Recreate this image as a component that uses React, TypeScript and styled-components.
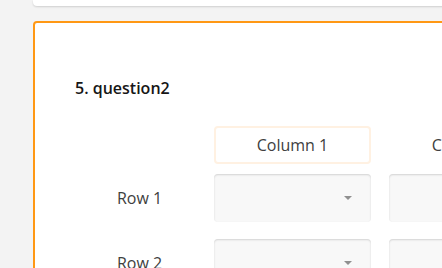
import React from "react";
import styled, { createGlobalStyle } from "styled-components";

const Global = createGlobalStyle`
  html, body { margin: 0; padding: 0; background: #f3f3f3; overflow: hidden; }
  body { font-family: "Open Sans", "Noto Sans", sans-serif; width: 442px; height: 268px; }
`;

const Page = styled.div`
  padding-left: 33px;
  display: flex;
  flex-direction: column;
  gap: 15px;
`;

const TopCard = styled.div`
  width: 700px;
  height: 6px;
  background: #ffffff;
  border-radius: 0 0 4px 4px;
  box-shadow: 0 1px 2px rgba(0, 0, 0, 0.15);
`;

const QuestionCard = styled.div`
  width: 700px;
  height: 400px;
  box-sizing: border-box;
  background: #ffffff;
  border: 2px solid #ff9814;
  border-radius: 4px;
  padding: 53px 0 0 40px;
`;

const Title = styled.div`
  font-size: 16px;
  line-height: 24px;
  font-weight: 600;
  color: #161616;
  margin-bottom: 26px;
`;

const MatrixRow = styled.div<{ $gap: number }>`
  display: grid;
  grid-template-columns: 129px 175px 175px;
  align-items: center;
  margin-bottom: ${(p) => p.$gap}px;
`;

const RowLabel = styled.div`
  font-size: 16px;
  line-height: 24px;
  color: #404040;
  text-align: center;
`;

const Cell = styled.div`
  padding: 0 8px 0 10px;
`;

const ColumnHeader = styled.div<{ $active?: boolean }>`
  box-sizing: border-box;
  height: 38px;
  display: flex;
  align-items: center;
  justify-content: center;
  font-size: 16px;
  color: #404040;
  border-radius: 4px;
  border: 2px solid ${(p) => (p.$active ? "#fff1e2" : "transparent")};
  white-space: nowrap;
`;

const Dropdown = styled.div`
  box-sizing: border-box;
  height: 48px;
  background: #f8f8f8;
  border-radius: 4px;
  box-shadow: inset 0 1px 2px rgba(0, 0, 0, 0.15);
  display: flex;
  align-items: center;
  justify-content: flex-end;
  padding-right: 19px;
`;

const Arrow = () => (
  <svg width="8" height="4" viewBox="0 0 8 4">
    <path d="M0 0 L8 0 L4 4 Z" fill="#909090" />
  </svg>
);

export default function App() {
  const rows = ["Row 1", "Row 2"];
  return (
    <>
      <Global />
      <Page>
        <TopCard />
        <QuestionCard>
          <Title>5. question2</Title>
          <MatrixRow $gap={10}>
            <RowLabel />
            <Cell>
              <ColumnHeader $active>Column 1</ColumnHeader>
            </Cell>
            <Cell>
              <ColumnHeader>Column 2</ColumnHeader>
            </Cell>
          </MatrixRow>
          {rows.map((r) => (
            <MatrixRow $gap={17} key={r}>
              <RowLabel>{r}</RowLabel>
              <Cell>
                <Dropdown>
                  <Arrow />
                </Dropdown>
              </Cell>
              <Cell>
                <Dropdown>
                  <Arrow />
                </Dropdown>
              </Cell>
            </MatrixRow>
          ))}
        </QuestionCard>
      </Page>
    </>
  );
}
